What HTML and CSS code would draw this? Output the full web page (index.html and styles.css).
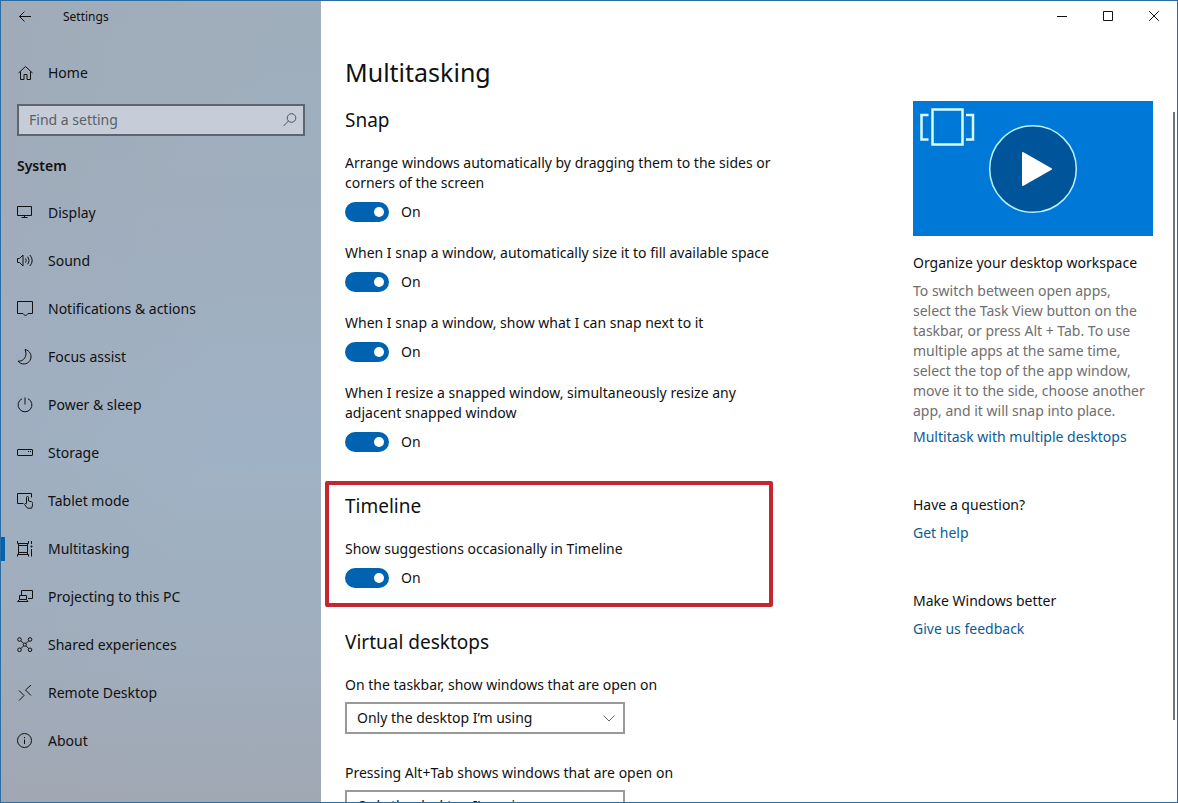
FILE: index.html
```html
<!DOCTYPE html>
<html lang="en">
<head>
<meta charset="utf-8">
<meta name="viewport" content="width=device-width, initial-scale=1">
<title>Settings</title>
<link rel="stylesheet" href="styles.css">
</head>
<body>
<div class="window">
  <aside class="sidebar">
    <header class="sidebar-bar">
      <button class="back" type="button" aria-label="Back">
        <svg class="icon" viewBox="0 0 16 16"><path d="M14 7.500H2.500M7.500 2.500l-5 5 5 5"/></svg>
      </button>
      <span class="app-name">Settings</span>
    </header>
    <a class="nav-link" href="#home">
      <svg class="icon icon-home" viewBox="0 0 16 16"><path d="M1.500 8L8.500 1.500l7 6.500M3.500 6.500v8h3.500v-5h3v5h3.500v-8"/></svg>
      Home
    </a>
    <div class="search">
      <input class="search-input" type="text" placeholder="Find a setting" aria-label="Find a setting">
      <svg class="icon search-icon" viewBox="0 0 16 16"><circle cx="9.500" cy="6" r="4.300"/><path d="M6.500 9L1.500 14"/></svg>
    </div>
    <h2 class="group-title">System</h2>
    <nav class="nav">
      <a class="nav-link" href="#display"><svg class="icon" viewBox="0 0 16 16"><path d="M.5 1.500h14v9H.5zM7.500 10.500v2M4.500 12.500h6"/></svg>Display</a>
      <a class="nav-link" href="#sound"><svg class="icon" viewBox="0 0 16 16"><path d="M.5 5.500v4h2L6 13V2L2.500 5.500zM8.500 5.500q1.600 2 0 4M10.700 3.700q3 3.800 0 7.600M12.900 2q4.600 5.500 0 11"/></svg>Sound</a>
      <a class="nav-link" href="#notifications"><svg class="icon" viewBox="0 0 16 16"><path d="M.5.500h15v12H11L8.500 15 6 12.500H.5z"/></svg>Notifications &amp; actions</a>
      <a class="nav-link" href="#focus"><svg class="icon" viewBox="0 0 16 16"><path d="M8 .5a7.300 7.300 0 1 1-7 11.700C6.500 12.500 11 7.500 8 .5z"/></svg>Focus assist</a>
      <a class="nav-link" href="#power"><svg class="icon" viewBox="0 0 16 16"><path d="M8 .5v7M5 1.700a6.900 6.900 0 1 0 6 0"/></svg>Power &amp; sleep</a>
      <a class="nav-link" href="#storage"><svg class="icon" viewBox="0 0 16 16"><rect x=".5" y="4.500" width="15" height="6" rx=".5"/><path d="M11 6.500h1M13 6.500h1"/></svg>Storage</a>
      <a class="nav-link" href="#tablet"><svg class="icon" viewBox="0 0 16 16"><path d="M6.500 10.500h-6v-10h14v4M9.500 10.500v-6q0-1 1-1t1 1v3.500l3 .7q1.200.4 1.200 1.700 0 2.700-1.200 4.800h-4L7.500 11.500q.5-1.700 2-.7"/></svg>Tablet mode</a>
      <a class="nav-link nav-link-active" href="#multitasking" aria-current="page"><svg class="icon" viewBox="0 0 16 16"><path d="M.5 0v2.500h11V0M1.500 4.500h9v7h-9zM1.500 2.500v2M10.500 2.500v2M.5 15.500v-2h11v2M1.500 11.500v2M10.500 11.500v2M14.500 0v3M14.500 8v7.500"/><path d="M14 5h1v1h-1z"/></svg>Multitasking</a>
      <a class="nav-link" href="#projecting"><svg class="icon" viewBox="0 0 16 16"><path d="M4.500 6V1.500h11v8H11M2.500 6.500h7v4h-7zM.5 12.500h10.500l-1.500-2h-7z"/></svg>Projecting to this PC</a>
      <a class="nav-link" href="#shared"><svg class="icon" viewBox="0 0 16 16"><circle cx="2.500" cy="2.500" r="1.800"/><circle cx="13" cy="2.500" r="1.800"/><circle cx="2.500" cy="12.800" r="1.800"/><circle cx="13" cy="12.800" r="1.800"/><circle cx="7.800" cy="7.600" r="1.600"/><path d="M4 3.800l2.600 2.600M11.600 3.800L9 6.400M4 11.500l2.600-2.700M11.600 11.500L9 8.800"/></svg>Shared experiences</a>
      <a class="nav-link" href="#remote"><svg class="icon" viewBox="0 0 16 16"><path d="M2 5.500l5 5-5 5M14 0L8.500 5l5.500 5.500"/></svg>Remote Desktop</a>
      <a class="nav-link" href="#about"><svg class="icon" viewBox="0 0 16 16"><circle cx="7.500" cy="7.500" r="7"/><path d="M7.500 6.500V11M7.500 4v1.200"/></svg>About</a>
    </nav>
  </aside>

  <div class="page">
    <div class="caption-buttons">
      <button class="caption-button" type="button" aria-label="Minimize"><svg class="caption-icon" viewBox="0 0 11 11"><path d="M0 5.500h10"/></svg></button>
      <button class="caption-button" type="button" aria-label="Maximize"><svg class="caption-icon" viewBox="0 0 11 11"><path d="M.5.500h9v9h-9z"/></svg></button>
      <button class="caption-button" type="button" aria-label="Close"><svg class="caption-icon" viewBox="0 0 11 11"><path d="M.2.200l9.600 9.600M9.800.2L.2 9.800"/></svg></button>
    </div>
    <div class="page-body">
      <main class="settings">
        <h1 class="page-title">Multitasking</h1>

        <section class="section">
          <h2 class="section-title">Snap</h2>
          <div class="field">
            <span class="label" id="snap-arrange">Arrange windows automatically by dragging them to the sides or corners of the screen</span>
            <label class="toggle"><input class="switch" type="checkbox" role="switch" aria-labelledby="snap-arrange" checked>On</label>
          </div>
          <div class="field">
            <span class="label" id="snap-size">When I snap a window, automatically size it to fill available space</span>
            <label class="toggle"><input class="switch" type="checkbox" role="switch" aria-labelledby="snap-size" checked>On</label>
          </div>
          <div class="field">
            <span class="label" id="snap-next">When I snap a window, show what I can snap next to it</span>
            <label class="toggle"><input class="switch" type="checkbox" role="switch" aria-labelledby="snap-next" checked>On</label>
          </div>
          <div class="field">
            <span class="label" id="snap-resize">When I resize a snapped window, simultaneously resize any adjacent snapped window</span>
            <label class="toggle"><input class="switch" type="checkbox" role="switch" aria-labelledby="snap-resize" checked>On</label>
          </div>
        </section>

        <section class="section section-marked">
          <h2 class="section-title">Timeline</h2>
          <div class="field">
            <span class="label" id="timeline-suggest">Show suggestions occasionally in Timeline</span>
            <label class="toggle"><input class="switch" type="checkbox" role="switch" aria-labelledby="timeline-suggest" checked>On</label>
          </div>
        </section>

        <section class="section">
          <h2 class="section-title">Virtual desktops</h2>
          <div class="field field-select">
            <label class="label" for="taskbar-windows">On the taskbar, show windows that are open on</label>
            <div class="select-box">
              <select class="select" id="taskbar-windows"><option>Only the desktop I’m using</option><option>All desktops</option></select>
              <svg class="chevron" viewBox="0 0 12 7"><path d="M.5.500L6 6 11.500.5"/></svg>
            </div>
          </div>
          <div class="field field-select">
            <label class="label" for="alttab-windows">Pressing Alt+Tab shows windows that are open on</label>
            <div class="select-box">
              <select class="select" id="alttab-windows"><option>Only the desktop I’m using</option><option>All desktops</option></select>
              <svg class="chevron" viewBox="0 0 12 7"><path d="M.5.500L6 6 11.500.5"/></svg>
            </div>
          </div>
        </section>
      </main>

      <aside class="help">
        <button class="video" type="button" aria-label="Play video">
          <svg class="video-art" viewBox="0 0 240 135">
            <g fill="none" stroke="#d9fbff" stroke-width="2.500">
              <path d="M19.500 8.500h30v35h-30zM15.500 14h-7v24.500h7M53 14h7v24.500h-7"/>
            </g>
            <circle cx="120" cy="68" r="43.300" fill="#005499" stroke="#b8f2ff" stroke-width="1.500"/>
            <path d="M110 52v32l28-16z" fill="#fff" stroke="#fff" stroke-width="2" stroke-linejoin="round"/>
          </svg>
        </button>
        <section class="help-block">
          <h3 class="help-title">Organize your desktop workspace</h3>
          <p class="help-text">To switch between open apps, select the Task View button on the taskbar, or press Alt + Tab. To use multiple apps at the same time, select the top of the app window, move it to the side, choose another app, and it will snap into place.</p>
          <a class="help-link" href="#desktops">Multitask with multiple desktops</a>
        </section>
        <section class="help-block">
          <h3 class="help-title">Have a question?</h3>
          <a class="help-link" href="#help">Get help</a>
        </section>
        <section class="help-block">
          <h3 class="help-title">Make Windows better</h3>
          <a class="help-link" href="#feedback">Give us feedback</a>
        </section>
      </aside>
      <div class="scroll-track"><div class="scroll-thumb"></div></div>
    </div>
  </div>
</div>
</body>
</html>
```
FILE: styles.css
```css
* {
  box-sizing: border-box;
}

body {
  margin: 0;
  font: 14px/20px "Noto Sans", "Open Sans", sans-serif;
  color: #111;
}

h1, h2, h3, p {
  margin: 0;
  font-weight: 400;
}

button {
  border: 0;
  padding: 0;
  background: none;
  font: inherit;
}

.window {
  display: grid;
  grid-template-columns: 320px minmax(0, 1fr);
  height: 100vh;
  overflow: hidden;
  border: 1px solid #2a6da4;
  background: #fff;
}

/* Sidebar */
.sidebar {
  overflow: hidden;
  background:
    linear-gradient(100deg, rgba(160, 166, 178, 0.35), rgba(160, 180, 200, 0) 60%),
    linear-gradient(#a0aebb 0, #9faebe 25%, #9fb2c5 55%, #a0aebd 80%, #a0a8b4 100%);
}

.sidebar-bar {
  display: flex;
  align-items: center;
  gap: 30px;
  height: 32px;
  margin-bottom: 16px;
  padding-left: 16px;
  font-size: 12px;
}

.back {
  display: flex;
}

.icon {
  flex: none;
  width: 16px;
  height: 16px;
  fill: none;
  stroke: #111;
}

.nav-link {
  position: relative;
  display: flex;
  align-items: center;
  gap: 15px;
  height: 48px;
  padding-left: 16px;
  color: inherit;
  text-decoration: none;
}

.nav-link-active::before {
  content: "";
  position: absolute;
  left: 0;
  width: 4px;
  height: 24px;
  background: #0063b1;
}

.search {
  display: grid;
  grid-template-columns: 1fr 26px;
  align-items: center;
  height: 32px;
  margin: 7px 16px 14px;
  border: 2px solid #5d666f;
  background: #c6cdd8;
}

.search-input {
  width: 100%;
  border: 0;
  padding: 0 0 0 10px;
  outline: 0;
  background: none;
  font: inherit;
  color: inherit;
}

.search-input::placeholder {
  color: #5a6068;
  opacity: 1;
}

.search-icon {
  stroke: #50565d;
  justify-self: center;
}

.group-title {
  margin-bottom: 7px;
  padding-left: 16px;
  font-size: 14px;
  font-weight: 600;
  line-height: 32px;
}

/* Page */
.page {
  display: flex;
  flex-direction: column;
  min-height: 0;
}

.caption-buttons {
  display: flex;
  flex: none;
  justify-content: flex-end;
}

.caption-button {
  display: grid;
  place-items: center;
  width: 46px;
  height: 30px;
}

.caption-icon {
  width: 11px;
  height: 11px;
  fill: none;
  stroke: #111;
}

.page-body {
  display: flex;
  flex: 1;
  min-height: 0;
}

.settings {
  display: flex;
  flex: 1;
  flex-direction: column;
  gap: 41px;
  min-width: 0;
  overflow: hidden;
  padding: 21px 0 0 24px;
}

.page-title {
  margin-bottom: -26px;
  font-size: 25px;
  line-height: 40px;
}

.section {
  max-width: 450px;
}

.section-title {
  margin-bottom: 20px;
  font-size: 19px;
  line-height: 26px;
}

.section-marked {
  max-width: 448px;
  margin: -12px 0 -19px -20px;
  border: 4px solid #c4272f;
  border-radius: 2px;
  padding: 8px 16px 15px;
}

.field {
  display: flex;
  flex-direction: column;
  gap: 9px;
}

.field + .field {
  margin-top: 21px;
}

.toggle {
  display: flex;
  align-items: center;
  gap: 12px;
}

.switch {
  appearance: none;
  display: flex;
  align-items: center;
  justify-content: flex-end;
  width: 44px;
  height: 20px;
  margin: 0;
  border-radius: 10px;
  padding-right: 5px;
  background: #0063b1;
}

.switch::before {
  content: "";
  width: 10px;
  height: 10px;
  border-radius: 50%;
  background: #fff;
}

.field-select {
  gap: 7px;
}

.field-select + .field-select {
  margin-top: 29px;
}

.select-box {
  display: grid;
  align-items: center;
  width: 280px;
}

.select,
.chevron {
  grid-area: 1 / 1;
}

.select {
  appearance: none;
  height: 32px;
  border: 2px solid #999;
  border-radius: 0;
  padding: 0 32px 0 10px;
  background: #fff;
  font: inherit;
  color: inherit;
}

.chevron {
  justify-self: end;
  width: 12px;
  height: 7px;
  margin-right: 10px;
  fill: none;
  stroke: #666;
  pointer-events: none;
}

/* Help column */
.help {
  flex: none;
  width: 240px;
  padding-top: 70px;
}

.video {
  display: block;
  width: 100%;
  margin-bottom: 17px;
  background: #0078d7;
}

.video-art {
  display: block;
  width: 100%;
}

.help-block {
  margin-bottom: 48px;
}

.help-title {
  margin-bottom: 8px;
  font-size: 14px;
}

.help-text {
  margin-bottom: 6px;
  padding-right: 4px;
  color: #6e6e6e;
}

.help-link {
  display: block;
  color: #0a5c96;
  text-decoration: none;
}

.scroll-track {
  flex: none;
  width: 24px;
  padding: 81px 2px 82px 20px;
}

.scroll-thumb {
  width: 2px;
  height: 100%;
  background: #6b7880;
}
```
